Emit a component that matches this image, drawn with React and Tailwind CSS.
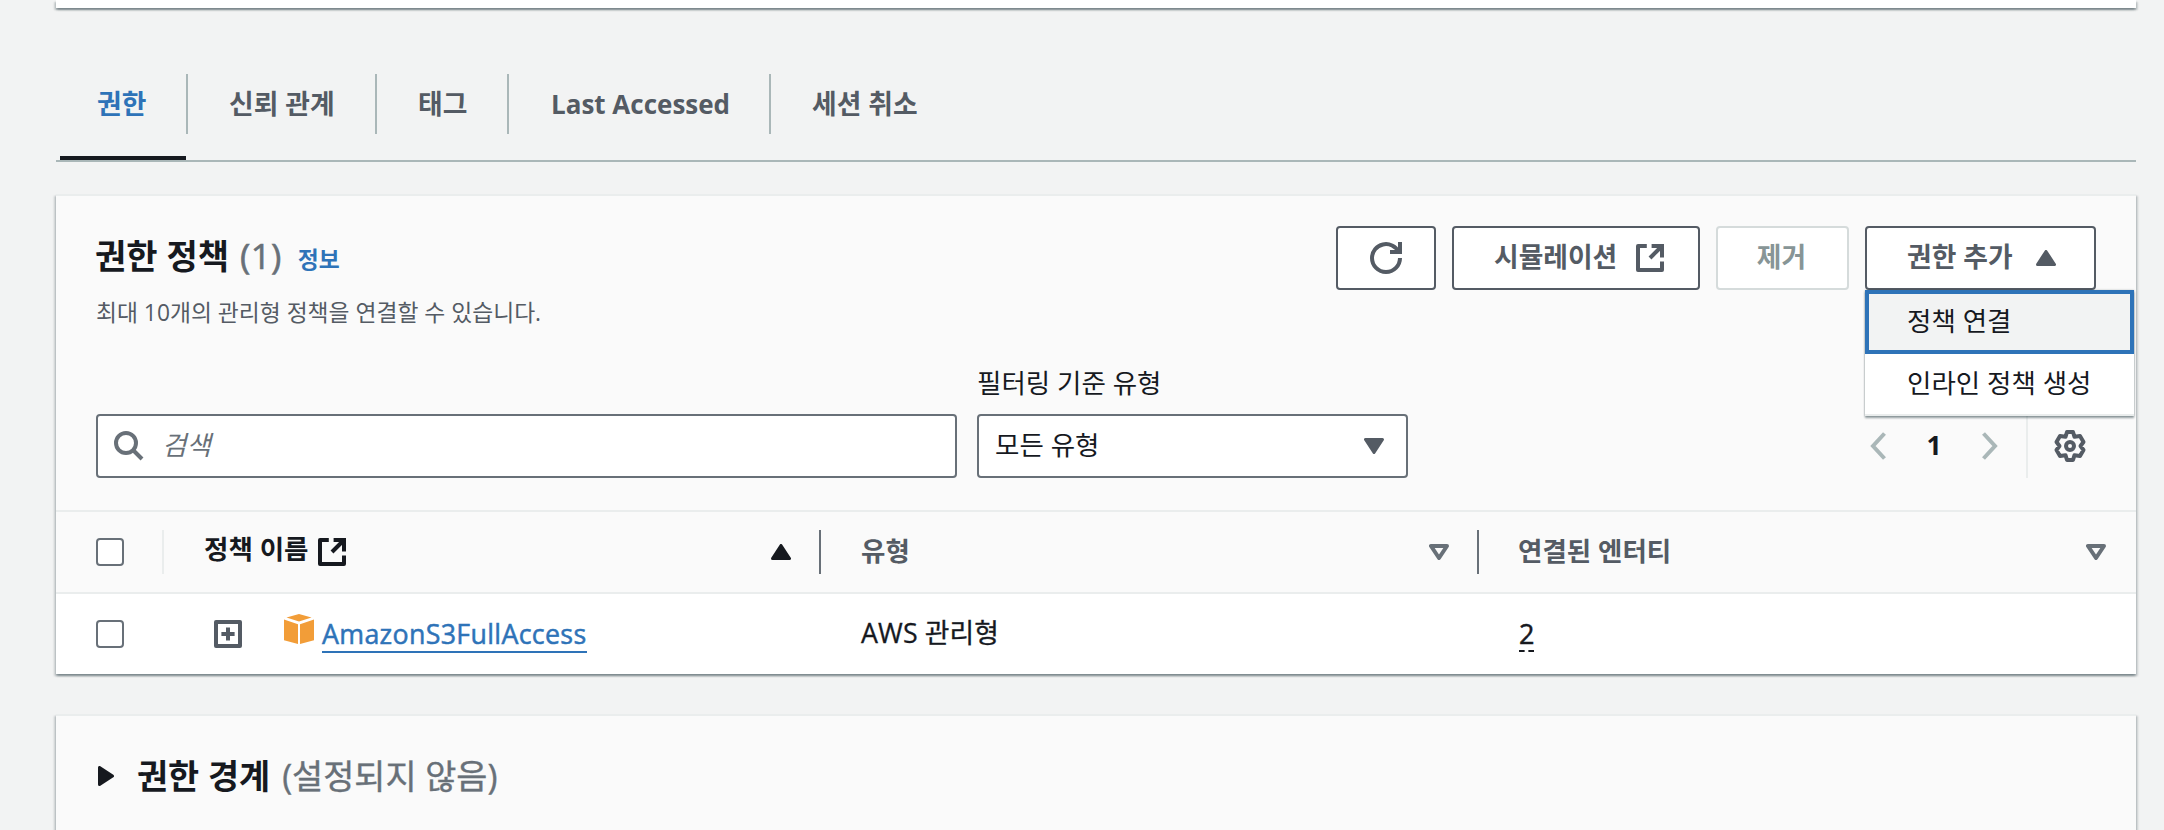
import React, { useState } from 'react';

const tabs = [
  { id: 'permissions', label: '권한', box: 'w-[128px] ml-1 pl-[37px] text-[26.8px]' },
  { id: 'trust', label: '신뢰 관계', box: 'w-[189px] pl-[41px] text-[26.8px]' },
  { id: 'tags', label: '태그', box: 'w-[132px] pl-[41px] text-[26.8px]' },
  { id: 'accessed', label: 'Last Accessed', box: 'w-[262px] pl-[42px] text-[26px]' },
  { id: 'sessions', label: '세션 취소', box: 'pl-[41px] text-[26.8px]' },
];

const policies = [
  { name: 'AmazonS3FullAccess', type: 'AWS 관리형', entities: 2 },
];

const ExternalIcon = ({ className }) => (
  <svg viewBox="0 0 16 16" className={className} fill="none" stroke="currentColor" strokeWidth="2">
    <path d="M8.8 2H14v5.7" />
    <path d="M8 8l6-6" />
    <path d="M14 9.8V14H2V2h4.4" strokeLinejoin="round" />
  </svg>
);

const Triangle = ({ className, hollow }) => (
  <svg viewBox="0 0 20 16" className={className} fill={hollow ? 'none' : 'currentColor'} stroke="currentColor" strokeLinejoin="round" strokeWidth={hollow ? 4 : 3}>
    {hollow ? <path d="M2 2h16l-8 12z" /> : <path d="M1.5 1.5h17l-8.5 13z" />}
  </svg>
);

const Checkbox = () => (
  <span className="block size-7 shrink-0 rounded border-2 border-[#687078] bg-white"></span>
);

const CubeIcon = () => (
  <svg viewBox="0 0 30 30" className="h-[30px] w-[30px] shrink-0" fill="#f29d38">
    <path d="M15 0l12.5 3.5L15 7.4 2.5 3.5z" />
    <path d="M0 5.4l14 4.8V30L0 26.2z" />
    <path d="M30 5.4l-14 4.8V30l14-3.8z" />
  </svg>
);

const GearIcon = () => (
  <svg viewBox="0 0 32 32" className="size-8" fill="none" stroke="currentColor" strokeWidth="4" strokeLinejoin="round">
    <path d="M13 2h6l1.5 4.8 5.5-.8 3.5 6-3 4 3 4-3.5 6-5.5-.8L19 30h-6l-1.5-4.8L6 26l-3.5-6 3-4-3-4L6 6l5.5.8z" />
    <circle cx="16" cy="16" r="4" />
  </svg>
);

const App = () => {
  const [activeTab, setActiveTab] = useState('permissions');
  const [menuOpen, setMenuOpen] = useState(true);

  const card = 'mx-7 ml-14 w-[2080px] border-t-2 border-[#eaeded] shadow-[0_2px_2px_0_rgba(0,28,36,0.3),2px_2px_2px_0_rgba(0,28,36,0.15),-2px_2px_2px_0_rgba(0,28,36,0.15)]';
  const button = 'flex h-16 items-center rounded border-2 bg-white text-[26.8px] font-bold';

  return (
    <div className="h-[830px] w-[2164px] overflow-hidden bg-[#f2f3f3] font-['Open_Sans','Noto_Sans_CJK_KR',sans-serif] text-[26.5px] leading-10 text-[#16191f]">
      {/* bottom edge of the summary card */}
      <div className="ml-14 h-2 w-[2080px] bg-white shadow-[0_2px_2px_0_rgba(0,28,36,0.3),2px_2px_2px_0_rgba(0,28,36,0.15),-2px_2px_2px_0_rgba(0,28,36,0.15)]"></div>

      {/* TABS */}
      <div className="ml-14 flex h-[154px] w-[2080px] border-b-2 border-[#aab7b8] pt-[66px]">
        {tabs.map((tab, i) => (
          <button
            key={tab.id}
            onClick={() => setActiveTab(tab.id)}
            className={`relative flex h-[60px] items-center font-bold whitespace-nowrap ${tab.box} ${
              i < tabs.length - 1 ? 'border-r-2 border-[#aab7b8]' : ''
            } ${activeTab === tab.id ? 'text-[#2e73b8]' : 'text-[#545b64]'}`}
          >
            {tab.label}
            {activeTab === tab.id && (
              <span className="absolute -bottom-[26px] left-0 h-1 w-full bg-[#16191f]"></span>
            )}
          </button>
        ))}
      </div>

      {/* PERMISSION POLICIES */}
      <section className={`mt-8 h-[480px] bg-[#fafafa] ${card}`}>
        <div className="flex h-[314px] flex-col px-10 pt-[30px]">
          <div className="flex justify-between">
            <div>
              <h2 className="-ml-px flex h-[60px] items-center text-[34px] font-bold">
                권한 정책
                <span className="ml-[11px] text-[35px] font-normal tracking-[0.4px] text-[#687078] [-webkit-text-stroke:0.6px]">(1)</span>
                <a className="mt-[7px] ml-4 text-[22.8px] text-[#2e73b8]">정보</a>
              </h2>
              <p className="mt-[7px] text-[22.8px] text-[#545b64]">최대 10개의 관리형 정책을 연결할 수 있습니다.</p>
            </div>

            <div className="relative flex gap-4 text-[#545b64]">
              <button className={`w-[100px] justify-center border-[#545b64] ${button}`}>
                <svg viewBox="0 0 16 16" className="size-8" fill="none" stroke="currentColor" strokeWidth="2">
                  <path d="M10 5h5V0" />
                  <path d="M15 8a7 7 0 0 1-14 0 7 7 0 0 1 13.3-3" />
                </svg>
              </button>
              <button className={`w-[248px] justify-between border-[#545b64] pr-8 pl-10 ${button}`}>
                <span className="pb-0.5">시뮬레이션</span>
                <ExternalIcon className="size-8" />
              </button>
              <button className={`w-[133px] justify-center border-[#d5dbdb] pr-0.5 text-[#879596] ${button}`}>
                <span className="pb-0.5">제거</span>
              </button>
              <button
                onClick={() => setMenuOpen(!menuOpen)}
                className={`w-[231px] justify-between border-[#545b64] pr-[38px] pl-10 ${button}`}
              >
                <span className="pb-0.5">권한 추가</span>
                <Triangle className="h-4 w-5 rotate-180" />
              </button>

              {menuOpen && (
                <ul className="absolute top-16 left-[529px] z-10 w-[269px] border-b-2 border-[#eaeded] bg-white text-[#16191f] shadow-[0_2px_2px_0_rgba(0,28,36,0.4),0_0_2px_0_rgba(0,28,36,0.25)]">
                  <li className="flex h-16 items-center border-4 border-[#2e73b8] bg-[#f2f3f3] pb-0.5 pl-[38px]">정책 연결</li>
                  <li className="flex h-[60px] items-center pb-0.5 pl-[42px] whitespace-nowrap">인라인 정책 생성</li>
                </ul>
              )}
            </div>
          </div>

          <div className="mt-auto mb-8 flex items-end">
            <div className="flex h-16 w-[861px] items-center rounded border-2 border-[#687078] bg-white pl-4 text-[#687078]">
              <svg viewBox="0 0 32 32" className="size-8" fill="none" stroke="currentColor" strokeWidth="4">
                <circle cx="12" cy="13" r="10" />
                <path d="M19 20l9 9" />
              </svg>
              <span className="ml-4 pb-0.5 italic">검색</span>
            </div>
            <div className="ml-5">
              <label className="block h-[51px]">필터링 기준 유형</label>
              <div className="flex h-16 w-[431px] items-center justify-between rounded border-2 border-[#687078] bg-white pr-[22px] pl-4">
                <span className="pb-0.5">모든 유형</span>
                <Triangle className="h-4 w-5 text-[#545b64]" />
              </div>
            </div>
            <div className="ml-auto flex h-16 items-center pr-[10px]">
              <svg viewBox="0 0 16 28" className="h-7 w-4" fill="none" stroke="#aab7b8" strokeWidth="4">
                <path d="M14.5 1.5L3 14l11.5 12.5" />
              </svg>
              <span className="w-[96px] pb-0.5 text-center font-bold">1</span>
              <svg viewBox="0 0 16 28" className="h-7 w-4" fill="none" stroke="#aab7b8" strokeWidth="4">
                <path d="M1.5 1.5L13 14 1.5 26.5" />
              </svg>
              <span className="mr-[26px] ml-7 h-16 w-0.5 bg-[#eaeded]"></span>
              <span className="text-[#545b64]"><GearIcon /></span>
            </div>
          </div>
        </div>

        {/* TABLE HEADER */}
        <div className="flex h-[84px] items-center border-y-2 border-[#eaeded] pl-10 font-bold text-[#545b64]">
          <Checkbox />
          <span className="ml-[38px] h-11 w-0.5 bg-[#eaeded]"></span>
          <div className="flex h-11 w-[657px] items-center border-r-2 border-[#687078] pr-7 pl-10 text-[#16191f]">
            <span className="pb-1.5">정책 이름</span>
            <ExternalIcon className="ml-2 size-8" />
            <Triangle className="ml-auto h-4 w-5 rotate-180" />
          </div>
          <div className="flex h-11 w-[658px] items-center justify-between border-r-2 border-[#687078] pr-7 pl-10">
            <span className="pb-0.5">유형</span>
            <Triangle hollow className="h-4 w-5 text-[#687078]" />
          </div>
          <div className="flex h-11 flex-1 items-center justify-between pr-[30px] pl-[39px]">
            <span className="pb-0.5">연결된 엔터티</span>
            <Triangle hollow className="h-4 w-5 text-[#687078]" />
          </div>
        </div>

        {policies.map((policy) => (
          <div key={policy.name} className="flex h-20 items-center bg-white pl-10">
            <Checkbox />
            <div className="flex w-[737px] items-center pl-[88px]">
              <svg viewBox="0 0 16 16" className="size-8 text-[#545b64]" fill="none" stroke="currentColor" strokeWidth="2">
                <path d="M2 2h12v12H2z" strokeLinejoin="round" />
                <path d="M8 4.7v6.6M4.7 8h6.6" />
              </svg>
              <span className="mb-[10px] ml-10"><CubeIcon /></span>
              <a className="ml-2 h-[38px] border-b-2 border-[#2e73b8] text-[26.8px] leading-[37px] tracking-[0.32px] text-[#2e73b8] [-webkit-text-stroke:0.5px]">{policy.name}</a>
            </div>
            <div className="w-[658px] pb-0.5 text-[26.8px] tracking-[0.1px] [-webkit-text-stroke:0.3px]">{policy.type}</div>
            <div className="h-9 border-b-2 border-dashed border-[#16191f] text-[27px] leading-9 [-webkit-text-stroke:0.5px]">{policy.entities}</div>
          </div>
        ))}
      </section>

      {/* PERMISSIONS BOUNDARY */}
      <section className={`mt-10 h-[140px] bg-[#fafafa] ${card}`}>
        <div className="flex h-[119px] items-center pl-[42px] text-[33.8px] font-bold">
          <svg viewBox="0 0 16 20" className="mt-px h-5 w-4" fill="currentColor" stroke="currentColor" strokeWidth="3" strokeLinejoin="round">
            <path d="M1.5 1.5v17l13-8.5z" />
          </svg>
          <span className="ml-[23px]">권한 경계</span>
          <span className="ml-3 font-normal text-[#687078] [-webkit-text-stroke:0.4px]">(설정되지 않음)</span>
        </div>
      </section>
    </div>
  );
};

export default App;
